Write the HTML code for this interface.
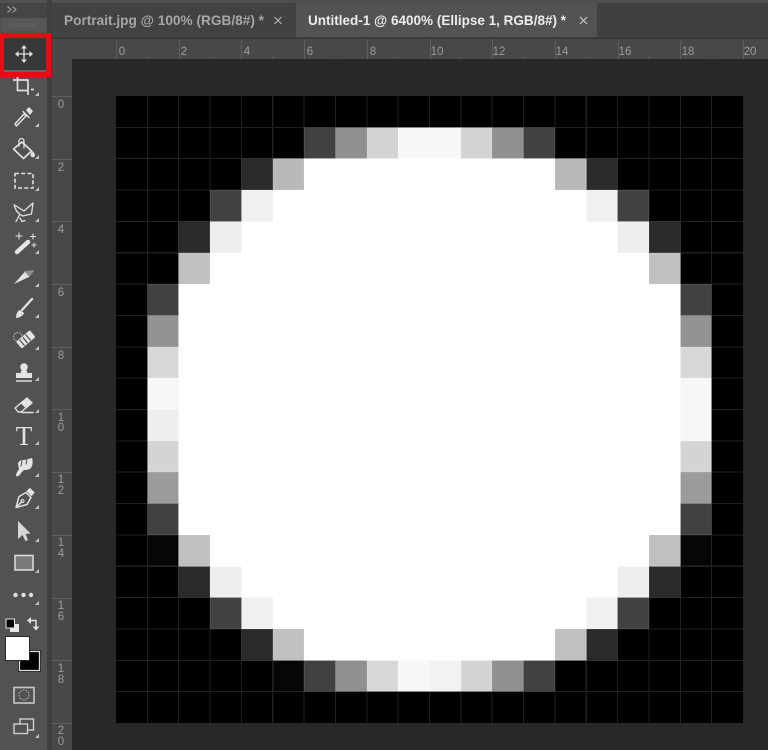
<!DOCTYPE html>
<html><head><meta charset="utf-8"><style>
html,body{margin:0;padding:0;background:#282828;width:768px;height:750px;overflow:hidden}
svg{display:block}
text{font-family:"Liberation Sans",sans-serif}
.root{filter:blur(.35px)}
</style></head><body>
<svg class="root" width="768" height="750" viewBox="0 0 768 750" xmlns="http://www.w3.org/2000/svg">
<rect width="768" height="750" fill="#282828"/>
<!-- chrome -->
<rect width="768" height="3" fill="#4f4f4f"/>
<rect x="48" y="3" width="720" height="35" fill="#404040"/>
<rect x="49" y="3" width="246" height="34" fill="#424242"/>
<rect x="296" y="3" width="301" height="34" fill="#535353"/>
<rect x="47" y="38" width="721" height="1" fill="#333"/>
<rect x="52" y="39" width="716" height="20" fill="#484848"/>
<rect x="52" y="39" width="20" height="711" fill="#484848"/>
<rect x="47" y="0" width="5" height="750" fill="#3f3f3f"/>
<rect x="0" y="0" width="47" height="750" fill="#525252"/>
<rect x="0" y="3" width="47" height="15" fill="#454545"/>
<rect x="2" y="19" width="44" height="12" fill="#575757"/>
<rect x="10" y="23" width="26" height="4" fill="#5c5c5c"/>
<path d="M7.500 6.500l3.500 3-3.500 3M12.500 6.500l3.500 3-3.500 3" fill="none" stroke="#a8a8a8" stroke-width="1"/>
<!-- tab text -->
<text x="64" y="25" font-size="14" font-weight="700" fill="#a6a6a6" textLength="200" lengthAdjust="spacingAndGlyphs">Portrait.jpg @ 100% (RGB/8#) *</text>
<path d="M274.500 17l7 7M281.500 17l-7 7" stroke="#b0b0b0" stroke-width="1.200" fill="none"/>
<text x="308" y="25" font-size="14" font-weight="700" fill="#ececec" textLength="258" lengthAdjust="spacingAndGlyphs">Untitled-1 @ 6400% (Ellipse 1, RGB/8#) *</text>
<path d="M580 17l7 7M587 17l-7 7" stroke="#c8c8c8" stroke-width="1.200" fill="none"/>
<!-- top ruler -->
<g stroke="#5e5e5e" stroke-width="1" fill="none">
<path d="M116.500 39v20M179.500 39v20M241.500 39v20M304.500 39v20M367.500 39v20M430.500 39v20M492.500 39v20M555.500 39v20M618.500 39v20M680.500 39v20M743.500 39v20"/>
<path d="M148 57v2M210 57v2M273 57v2M336 57v2M398 57v2M461 57v2M524 57v2M586 57v2M649 57v2M712 57v2"/>
<path d="M52 96.500h20M52 159.500h20M52 221.500h20M52 284.500h20M52 347.500h20M52 409.500h20M52 472.500h20M52 535.500h20M52 598.500h20M52 660.500h20M52 723.500h20"/>
</g>
<g font-size="11.500" fill="#9c9c9c" text-anchor="middle">
<text x="122" y="55">0</text><text x="184" y="55">2</text><text x="247" y="55">4</text><text x="310" y="55">6</text><text x="373" y="55">8</text><text x="437" y="55">10</text><text x="499" y="55">12</text><text x="562" y="55">14</text><text x="625" y="55">16</text><text x="688" y="55">18</text><text x="750" y="55">20</text>
<text x="61" y="108">0</text><text x="61" y="171">2</text><text x="61" y="233">4</text><text x="61" y="296">6</text><text x="61" y="359">8</text>
<text x="61" y="421">1</text><text x="61" y="431">0</text>
<text x="61" y="483">1</text><text x="61" y="494">2</text>
<text x="61" y="546">1</text><text x="61" y="557">4</text>
<text x="61" y="609">1</text><text x="61" y="620">6</text>
<text x="61" y="672">1</text><text x="61" y="683">8</text>
<text x="61" y="734">2</text><text x="61" y="745">0</text>
</g>
<!-- canvas -->
<svg x="116" y="96" width="627" height="627" viewBox="0 0 20 20" shape-rendering="crispEdges">
<rect width="20" height="20" fill="#000"/>
<g>
<rect x="6" y="1" width="1" height="1" fill="#414141"/><rect x="7" y="1" width="1" height="1" fill="#909090"/><rect x="8" y="1" width="1" height="1" fill="#d4d4d4"/><rect x="9" y="1" width="2" height="1" fill="#f7f7f7"/><rect x="11" y="1" width="1" height="1" fill="#d4d4d4"/><rect x="12" y="1" width="1" height="1" fill="#909090"/><rect x="13" y="1" width="1" height="1" fill="#414141"/>
<rect x="4" y="2" width="1" height="1" fill="#2a2a2a"/><rect x="5" y="2" width="1" height="1" fill="#b9b9b9"/><rect x="14" y="2" width="1" height="1" fill="#b9b9b9"/><rect x="15" y="2" width="1" height="1" fill="#2a2a2a"/>
<rect x="3" y="3" width="1" height="1" fill="#414141"/><rect x="4" y="3" width="1" height="1" fill="#f0f0f0"/><rect x="15" y="3" width="1" height="1" fill="#f0f0f0"/><rect x="16" y="3" width="1" height="1" fill="#414141"/>
<rect x="2" y="4" width="1" height="1" fill="#2a2a2a"/><rect x="3" y="4" width="1" height="1" fill="#eeeeee"/><rect x="16" y="4" width="1" height="1" fill="#eeeeee"/><rect x="17" y="4" width="1" height="1" fill="#2a2a2a"/>
<rect x="2" y="5" width="1" height="1" fill="#c0c0c0"/><rect x="17" y="5" width="1" height="1" fill="#c0c0c0"/>
<rect x="1" y="6" width="1" height="1" fill="#414141"/><rect x="18" y="6" width="1" height="1" fill="#414141"/>
<rect x="1" y="7" width="1" height="1" fill="#939393"/><rect x="18" y="7" width="1" height="1" fill="#939393"/>
<rect x="1" y="8" width="1" height="1" fill="#d8d8d8"/><rect x="18" y="8" width="1" height="1" fill="#d8d8d8"/>
<rect x="1" y="9" width="1" height="1" fill="#f7f7f7"/><rect x="18" y="9" width="1" height="1" fill="#f7f7f7"/>
<rect x="1" y="10" width="1" height="1" fill="#eeeeee"/><rect x="18" y="10" width="1" height="1" fill="#f7f7f7"/>
<rect x="1" y="11" width="1" height="1" fill="#d4d4d4"/><rect x="18" y="11" width="1" height="1" fill="#d4d4d4"/>
<rect x="1" y="12" width="1" height="1" fill="#9b9b9b"/><rect x="18" y="12" width="1" height="1" fill="#9b9b9b"/>
<rect x="1" y="13" width="1" height="1" fill="#414141"/><rect x="18" y="13" width="1" height="1" fill="#414141"/>
<rect x="1" y="14" width="1" height="1" fill="#060606"/><rect x="2" y="14" width="1" height="1" fill="#c0c0c0"/><rect x="17" y="14" width="1" height="1" fill="#c0c0c0"/><rect x="18" y="14" width="1" height="1" fill="#060606"/>
<rect x="2" y="15" width="1" height="1" fill="#2a2a2a"/><rect x="3" y="15" width="1" height="1" fill="#eeeeee"/><rect x="16" y="15" width="1" height="1" fill="#eeeeee"/><rect x="17" y="15" width="1" height="1" fill="#2a2a2a"/>
<rect x="3" y="16" width="1" height="1" fill="#414141"/><rect x="4" y="16" width="1" height="1" fill="#f0f0f0"/><rect x="15" y="16" width="1" height="1" fill="#f0f0f0"/><rect x="16" y="16" width="1" height="1" fill="#414141"/>
<rect x="4" y="17" width="1" height="1" fill="#2a2a2a"/><rect x="5" y="17" width="1" height="1" fill="#c0c0c0"/><rect x="14" y="17" width="1" height="1" fill="#c0c0c0"/><rect x="15" y="17" width="1" height="1" fill="#2a2a2a"/>
<rect x="5" y="18" width="1" height="1" fill="#060606"/><rect x="6" y="18" width="1" height="1" fill="#414141"/><rect x="7" y="18" width="1" height="1" fill="#909090"/><rect x="8" y="18" width="1" height="1" fill="#d8d8d8"/><rect x="9" y="18" width="1" height="1" fill="#f7f7f7"/><rect x="10" y="18" width="1" height="1" fill="#f2f2f2"/><rect x="11" y="18" width="1" height="1" fill="#d4d4d4"/><rect x="12" y="18" width="1" height="1" fill="#909090"/><rect x="13" y="18" width="1" height="1" fill="#414141"/>
</g>
<path d="M1 0v20M2 0v20M3 0v20M4 0v20M5 0v20M6 0v20M7 0v20M8 0v20M9 0v20M10 0v20M11 0v20M12 0v20M13 0v20M14 0v20M15 0v20M16 0v20M17 0v20M18 0v20M19 0v20M0 1h20M0 2h20M0 3h20M0 4h20M0 5h20M0 6h20M0 7h20M0 8h20M0 9h20M0 10h20M0 11h20M0 12h20M0 13h20M0 14h20M0 15h20M0 16h20M0 17h20M0 18h20M0 19h20" stroke="#fff" stroke-opacity=".13" stroke-width=".032" fill="none"/>
<path d="M6 2h8v1h1v1h1v1h1v1h1v8h-1v1h-1v1h-1v1h-1v1H6v-1H5v-1H4v-1H3v-1H2V6h1V5h1V4h1V3h1z" fill="#fff"/>
</svg>
<!-- move tool selected -->
<rect x="4" y="38" width="42" height="34" fill="#383838"/>
<rect x="4" y="70" width="42" height="2" fill="#666"/>
<path d="M0 33h51v44H0z M4 38v34h42V38z" fill="#e60b14" fill-rule="evenodd"/>
<path d="M24 45l3 3.500h-6zM24 63l3-3.500h-6zM15 54l3.500-3v6zM33 54l-3.500-3v6z" fill="#e0e0e0"/>
<g fill="none" stroke="#e0e0e0" stroke-width="1.300" stroke-linecap="round" stroke-linejoin="round">
<path d="M24 47v14M17 54h14"/>
<!-- crop -->
<path d="M13 80h15v15M17.500 77v13.500H28M31 89.500h3" stroke-width="1.700" stroke-linecap="butt"/>
<!-- eyedropper -->
<path d="M15 124l1.500 2 9.500-10-2-2zM23 111.500l6 6" stroke-width="1.500"/>
<path d="M27 110l2-2 3 3-2 3z" fill="#e0e0e0" stroke-width="1.500"/>
<!-- bucket -->
<path d="M13.500 149l8.500-7 9.500 9-8 7.500z" stroke-width="1.700"/>
<path d="M19 146v-5a2.500 2.500 0 0 1 5 0v7" stroke-width="1.300"/>
<path d="M32.500 151c1.500 1.500 2.500 3 2.500 4a2 2 0 0 1-4.500 0c0-1.500 1-3 2-4z" fill="#e0e0e0" stroke="none"/>
<!-- marquee -->
<rect x="15" y="173.500" width="18" height="14.500" stroke-width="1.600" stroke-dasharray="4 2.200" stroke-linecap="butt"/>
<!-- lasso -->
<path d="M14.500 205l9.500 6 9-8-1.500 11-9 2-3-2-3-3-2.500-6zM19.500 215l-3.500 6.500M20 218l2 3.500 3-1" stroke-width="1.300"/>
<!-- heal -->
<path d="M14 284l11-12.500 5 5z" fill="#e4e4e4" stroke="none"/>
<path d="M24 271l10.500-1-5 7z" fill="#8e8e8e" stroke="none"/>
<!-- wand -->
<path d="M17 252l11-10" stroke-width="4.500" stroke-linecap="round" stroke="#e4e4e4"/>
<path d="M19 233v6M16 236h6M33 234v5M30.500 236.500h5M34 243v4M32 245h4" stroke-width="1.100"/>
<!-- brush -->
<path d="M22 310l10-11" stroke-width="2.400"/>
<path d="M16 318c0-3 1-7 4-8l4 3c-1 3-5 5-8 5z" fill="#e4e4e4" stroke="none"/>
<!-- bandage -->
<g transform="rotate(-40 25 340)"><rect x="17" y="335.500" width="18" height="9" rx="1.500" fill="#e4e4e4" stroke="none"/><path d="M21 336v8M25 336v8M29 336v8" stroke="#525252" stroke-width="1.300" stroke-linecap="butt"/></g>
<circle cx="18" cy="337" r="4.500" stroke-width="1" stroke-dasharray="1.500 1.300" stroke-linecap="butt" stroke="#c8c8c8"/>
<!-- stamp -->
<circle cx="24" cy="367" r="3.800" fill="#e4e4e4" stroke="none"/>
<path d="M21.500 370h5l1 3h-7zM16 373h16v5H16z" fill="#e4e4e4" stroke="none"/>
<path d="M16 381h16" stroke-width="1.500" stroke-linecap="butt"/>
<!-- eraser -->
<path d="M15 408l12-10 5 5-11 9h-3zM22 412.500h11" stroke-width="1.400"/>
<path d="M20.500 403l6-5 5 5-6 5z" fill="#e4e4e4" stroke="none"/>
<!-- smudge -->
<path d="M16 476c0-3 2-5 3-7l-1-5c0-3 3-4 6-4l8-2c1 3 1 7-1 10-2 2-5 2-7 2l-3 3c-1 2-3 4-5 3z" fill="#e4e4e4" stroke="none"/>
<path d="M22 461l-1 5M27 459l-1 5" stroke="#525252" stroke-width="1"/>
<!-- pen -->
<path d="M16 507.500l3-11 7-4 5 5-4 7zM16 507.500l6-6" stroke-width="1.500"/>
<path d="M27 491l3-2.500 4 4-2.500 3z" fill="#e4e4e4" stroke-width="1"/>
<circle cx="22.500" cy="501" r="1.500" stroke-width="1"/>
</g>
<text x="24" y="445" font-size="27" text-anchor="middle" fill="#e4e4e4" style="font-family:'Liberation Serif',serif">T</text>
<path d="M18 521l12.500 12.500-5 .5 2.500 6-2.500 1-3-6-4.500 4z" fill="#d8d8d8"/>
<rect x="15" y="555.500" width="18" height="14.500" fill="#7a7a7a" stroke="#d8d8d8" stroke-width="1.600"/>
<g fill="#e0e0e0"><circle cx="15.500" cy="595" r="2.200"/><circle cx="23.500" cy="595" r="2.200"/><circle cx="31" cy="595" r="2.200"/></g>
<!-- swatches -->
<rect x="10" y="624" width="9" height="8" fill="#e8e8e8"/>
<rect x="6" y="619" width="8.500" height="9" fill="#000" stroke="#e8e8e8" stroke-width="1"/>
<path d="M27.500 620.500h8.500v8" fill="none" stroke="#e0e0e0" stroke-width="1.500"/>
<path d="M31 617v7l-4-3.500zM32.500 626.500h7l-3.500 4z" fill="#e0e0e0"/>
<rect x="18.500" y="650.500" width="22" height="21" fill="#000" stroke="#1a1a1a" stroke-width="1"/>
<rect x="19.500" y="651.500" width="20" height="19" fill="#000" stroke="#ddd" stroke-width="1.300"/>
<rect x="5.500" y="636.500" width="24" height="24" fill="#fff" stroke="#2a2a2a" stroke-width="1"/>
<!-- mask -->
<rect x="14" y="687.500" width="20" height="15.500" fill="none" stroke="#c8c8c8" stroke-width="1.600"/>
<circle cx="24" cy="695" r="5" fill="none" stroke="#bbb" stroke-width="1" stroke-dasharray="1.500 1.300"/>
<!-- screen mode -->
<rect x="20" y="719" width="13.500" height="11" fill="none" stroke="#d0d0d0" stroke-width="1.400"/>
<rect x="14" y="724" width="13.500" height="9.500" fill="#525252" stroke="#d0d0d0" stroke-width="1.400"/>
<rect x="20.700" y="724.700" width="6" height="5" fill="#525252"/>
<!-- corner triangles -->
<g fill="#c4c4c4">
<path d="M39 92v4h-4zM39 123v4h-4zM39 155v4h-4zM39 187v4h-4zM39 218v4h-4zM39 250v4h-4zM39 283v4h-4zM39 314v4h-4zM39 346v4h-4zM39 377v4h-4zM39 409v4h-4zM39 441v4h-4zM39 473v4h-4zM39 505v4h-4zM39 538v4h-4zM39 569v4h-4zM39 601v4h-4zM39 734v4h-4z"/>
</g>
</svg>
</body></html>
